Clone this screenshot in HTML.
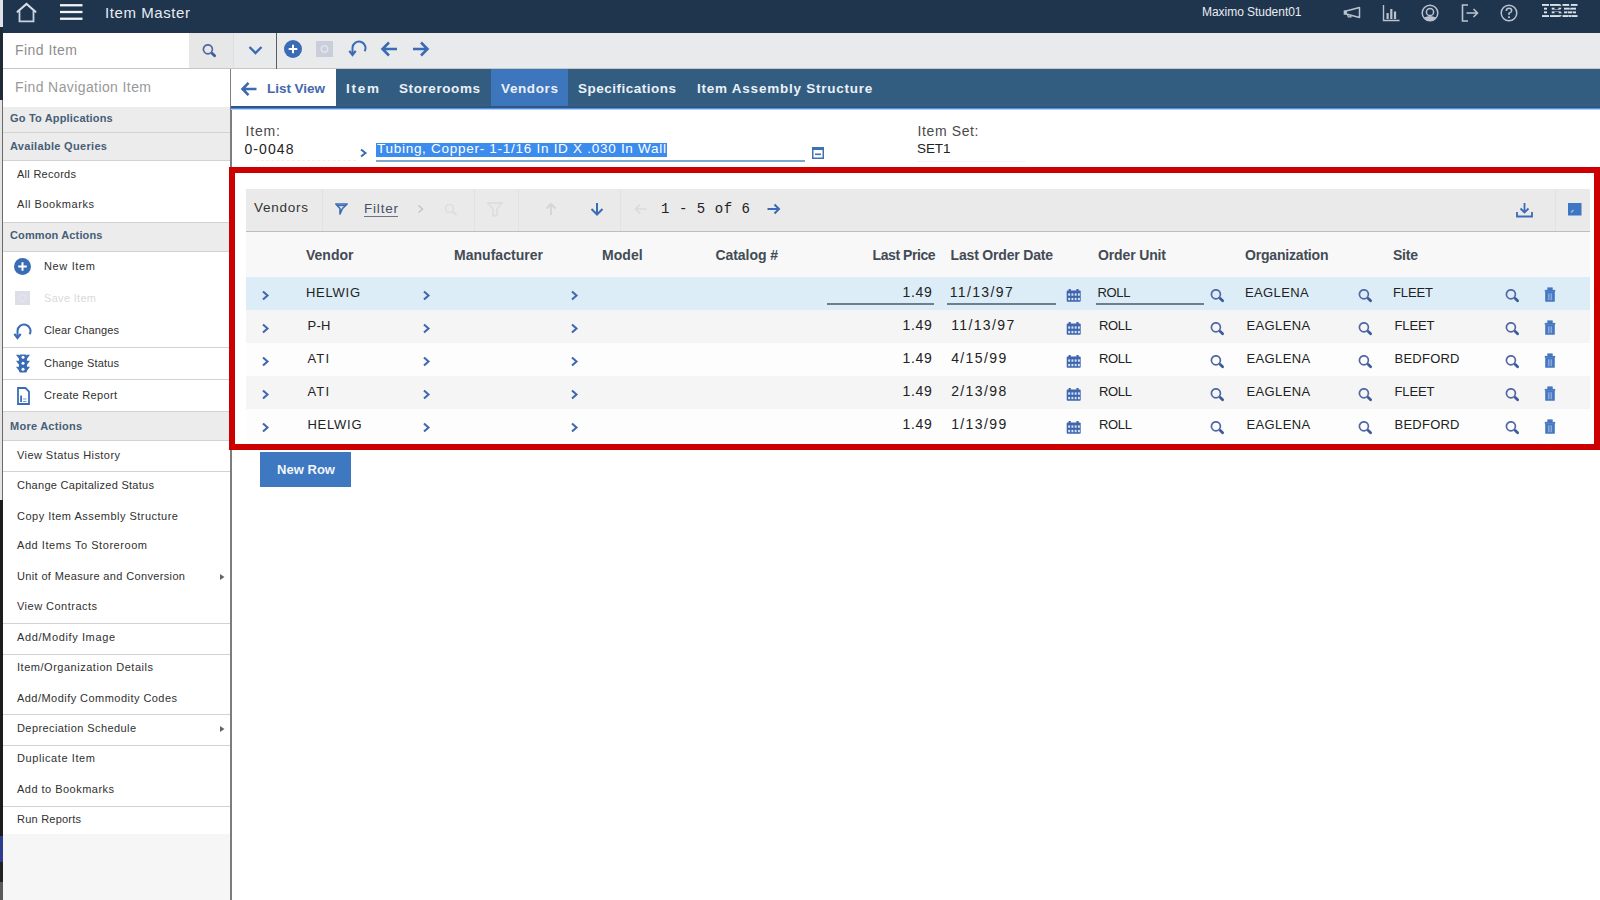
<!DOCTYPE html>
<html><head><meta charset="utf-8"><title>Item Master</title><style>*{box-sizing:border-box;margin:0;padding:0}
html,body{width:1600px;height:900px;overflow:hidden;background:#fff;font-family:"Liberation Sans",sans-serif;position:relative}
.a{position:absolute;display:block}
.t{position:absolute;white-space:nowrap;line-height:1}
</style></head><body>
<div class="a" style="left:0px;top:0px;width:3px;height:900px;background:#e4e4e4;"></div>
<div class="a" style="left:2px;top:0px;width:1px;height:900px;background:#6a6a6a;"></div>
<div class="a" style="left:0px;top:0px;width:3px;height:27px;background:#dfe3e8;"></div>
<div class="a" style="left:0px;top:27px;width:3px;height:73px;background:#1e2a36;"></div>
<div class="a" style="left:0px;top:500px;width:3px;height:336px;background:#1c1c1c;"></div>
<div class="a" style="left:0px;top:836px;width:3px;height:26px;background:#2d3c8e;"></div>
<div class="a" style="left:0px;top:862px;width:3px;height:20px;background:#222222;"></div>
<div class="a" style="left:0px;top:882px;width:3px;height:18px;background:#5a5a5a;"></div>
<div class="a" style="left:3px;top:0px;width:1597px;height:33px;background:#1f354d;"></div>
<div class="a" style="left:3px;top:33px;width:1597px;height:36px;background:#e9eaec;"></div>
<div class="a" style="left:3px;top:68px;width:1597px;height:1px;background:#c6c6c6;"></div>
<div class="a" style="left:3px;top:33px;width:186px;height:35px;background:#ffffff;"></div>
<div class="a" style="left:189px;top:33px;width:44px;height:35px;background:#e7e7e7;"></div>
<div class="a" style="left:233px;top:33px;width:1px;height:35px;background:#dedede;"></div>
<div class="a" style="left:276px;top:33px;width:1px;height:36px;background:#5c5c5c;"></div>
<div class="a" style="left:3px;top:69px;width:227px;height:831px;background:#ffffff;"></div>
<div class="a" style="left:3px;top:834px;width:227px;height:66px;background:#f6f6f6;"></div>
<div class="a" style="left:230px;top:69px;width:2px;height:831px;background:#7d7d7d;"></div>
<div class="a" style="left:3px;top:107px;width:227px;height:25px;background:#ececec;"></div>
<div class="a" style="left:3px;top:133px;width:227px;height:27px;background:#ececec;"></div>
<div class="a" style="left:3px;top:223px;width:227px;height:28px;background:#ececec;"></div>
<div class="a" style="left:3px;top:412px;width:227px;height:28px;background:#ececec;"></div>
<div class="a" style="left:3px;top:132px;width:227px;height:1px;background:#d2d2d2;"></div>
<div class="a" style="left:3px;top:160px;width:227px;height:1px;background:#d2d2d2;"></div>
<div class="a" style="left:3px;top:222px;width:227px;height:1px;background:#d2d2d2;"></div>
<div class="a" style="left:3px;top:251px;width:227px;height:1px;background:#d2d2d2;"></div>
<div class="a" style="left:3px;top:347px;width:227px;height:1px;background:#d2d2d2;"></div>
<div class="a" style="left:3px;top:379px;width:227px;height:1px;background:#d2d2d2;"></div>
<div class="a" style="left:3px;top:411px;width:227px;height:1px;background:#d2d2d2;"></div>
<div class="a" style="left:3px;top:440px;width:227px;height:1px;background:#d2d2d2;"></div>
<div class="a" style="left:3px;top:471px;width:227px;height:1px;background:#d2d2d2;"></div>
<div class="a" style="left:3px;top:623px;width:227px;height:1px;background:#d2d2d2;"></div>
<div class="a" style="left:3px;top:654px;width:227px;height:1px;background:#d2d2d2;"></div>
<div class="a" style="left:3px;top:714px;width:227px;height:1px;background:#d2d2d2;"></div>
<div class="a" style="left:3px;top:745px;width:227px;height:1px;background:#d2d2d2;"></div>
<div class="a" style="left:3px;top:806px;width:227px;height:1px;background:#d2d2d2;"></div>
<div class="a" style="left:231px;top:69px;width:1369px;height:38px;background:#335d80;"></div>
<div class="a" style="left:231px;top:104px;width:1369px;height:2px;background:#385c82;"></div>
<div class="a" style="left:231px;top:106px;width:1369px;height:2px;background:#2c5688;"></div>
<div class="a" style="left:231px;top:108px;width:1369px;height:1px;background:#4f8fdc;"></div>
<div class="a" style="left:231px;top:109px;width:1369px;height:1px;background:#b5d0f2;"></div>
<div class="a" style="left:231px;top:69px;width:105px;height:37px;background:#ffffff;"></div>
<div class="a" style="left:491px;top:69px;width:77px;height:37px;background:#3e76be;"></div>
<svg class="a" style="left:16px;top:2px;" width="22" height="21" viewBox="0 0 22 21"><path d="M1.5 9.8 L10.5 1.9 L19.5 9.8" fill="none" stroke="#d5deea" stroke-width="2" stroke-linecap="round"/><path d="M3.5 8.8 V19.4 H17.5 V8.8" fill="none" stroke="#c6d2e0" stroke-width="1.8"/></svg>
<svg class="a" style="left:60px;top:4px;" width="23" height="17" viewBox="0 0 23 17"><rect x="0" y="0.1" width="22.5" height="2.3" fill="#f2f4f7"/><rect x="0" y="6.85" width="22.5" height="2.3" fill="#f2f4f7"/><rect x="0" y="13.6" width="22.5" height="2.3" fill="#f2f4f7"/></svg>
<svg class="a" style="left:1343px;top:6px;" width="19" height="14" viewBox="0 0 19 14"><path d="M3.2 5 L16.5 1.5 V11.5 L3.2 8 Z" fill="none" stroke="#b9c3cf" stroke-width="1.5" stroke-linejoin="round"/><rect x="0.7" y="4.3" width="2.6" height="4.4" fill="#b9c3cf"/><path d="M4.5 8.6 L5.3 10.8 H8 L7.7 9.3" fill="none" stroke="#b9c3cf" stroke-width="1.2"/></svg>
<svg class="a" style="left:1382px;top:4px;" width="18" height="18" viewBox="0 0 18 18"><path d="M1.5 1 V16.5 H17.5" fill="none" stroke="#b9c3cf" stroke-width="1.4"/><rect x="4.5" y="9" width="2.2" height="6" fill="#b9c3cf"/><rect x="8.2" y="5" width="2.2" height="10" fill="#b9c3cf"/><rect x="11.9" y="7.5" width="2.2" height="7.5" fill="#b9c3cf"/></svg>
<svg class="a" style="left:1421px;top:4px;" width="18" height="18" viewBox="0 0 18 18"><circle cx="9" cy="9" r="7.8" fill="none" stroke="#b9c3cf" stroke-width="1.5"/><circle cx="9" cy="8" r="3.6" fill="none" stroke="#b9c3cf" stroke-width="1.5"/><path d="M3 13.5 Q9 10.5 15 13.5 Q12 17 9 17 Q6 17 3 13.5Z" fill="#b9c3cf"/></svg>
<svg class="a" style="left:1461px;top:4px;" width="19" height="18" viewBox="0 0 19 18"><path d="M7 1 H1.5 V17 H7" fill="none" stroke="#b9c3cf" stroke-width="1.6"/><path d="M5.5 9 H16.5 M12.5 5 L16.5 9 L12.5 13" fill="none" stroke="#b9c3cf" stroke-width="1.6"/></svg>
<svg class="a" style="left:1500px;top:4px;" width="18" height="18" viewBox="0 0 18 18"><circle cx="9" cy="9" r="7.8" fill="none" stroke="#b9c3cf" stroke-width="1.5"/><path d="M6.3 7 Q6.3 4.3 9 4.3 Q11.7 4.3 11.7 6.8 Q11.7 8.4 9 9.3 V11" fill="none" stroke="#b9c3cf" stroke-width="1.5"/><rect x="8.1" y="12.3" width="1.8" height="1.8" fill="#b9c3cf"/></svg>
<svg class="a" style="left:1542px;top:4px;" width="37" height="13" viewBox="0 0 37 13"><defs><mask id="ibmm"><rect x="0" y="0" width="37" height="1.9" fill="#fff"/><rect x="0" y="3.7" width="37" height="1.9" fill="#fff"/><rect x="0" y="7.4" width="37" height="1.9" fill="#fff"/><rect x="0" y="11.1" width="37" height="1.9" fill="#fff"/></mask></defs><g fill="#d8e0ea" mask="url(#ibmm)"><rect x="0" y="0" width="7" height="2.6"/><rect x="0" y="10.4" width="7" height="2.6"/><rect x="2" y="0" width="3" height="13"/><path d="M8 0 H17 Q19.5 0 19.5 3 Q19.5 5.5 17.5 6.5 Q19.8 7.5 19.8 10 Q19.8 13 17 13 H8 V10.4 H9.7 V2.6 H8 Z M12.5 2.6 V5.3 H15.5 Q16.5 5.3 16.5 4 Q16.5 2.6 15.5 2.6 Z M12.5 7.7 V10.4 H15.8 Q16.8 10.4 16.8 9 Q16.8 7.7 15.8 7.7 Z" fill-rule="evenodd"/><rect x="20.5" y="0" width="5.5" height="2.6"/><rect x="30" y="0" width="5.5" height="2.6"/><rect x="20.5" y="10.4" width="5.5" height="2.6"/><rect x="30" y="10.4" width="5.5" height="2.6"/><rect x="22" y="0" width="3" height="13"/><rect x="31" y="0" width="3" height="13"/><path d="M24 0 H27 L28 6 L29 0 H32 L29.5 13 H26.5 Z"/></g></svg>
<svg class="a" style="left:202px;top:44px;" width="15" height="14" viewBox="0 0 15 14"><circle cx="5.9" cy="5.3" r="4.5" fill="none" stroke="#5266a6" stroke-width="1.7"/><path d="M10.3 9.6 L12.6 11.8" stroke="#3a5d9a" stroke-width="2.8" stroke-linecap="round"/></svg>
<svg class="a" style="left:248px;top:45px;" width="15" height="10" viewBox="0 0 15 10"><path d="M1.5 2 L7.5 8 L13.5 2" fill="none" stroke="#3a6cb5" stroke-width="2.4"/></svg>
<svg class="a" style="left:284px;top:40px;" width="18" height="18" viewBox="0 0 18 18"><circle cx="9.0" cy="9.0" r="9.0" fill="#3a6cb5"/><path d="M9.0 4.7 V13.3 M4.7 9.0 H13.3" stroke="#fff" stroke-width="2"/></svg>
<svg class="a" style="left:316px;top:41px;" width="17" height="17" viewBox="0 0 17 17"><rect x="0" y="0" width="17" height="16" fill="#c9ceda"/><circle cx="8.5" cy="8.0" r="3.2" fill="none" stroke="#e1e4ec" stroke-width="1.5"/></svg>
<svg class="a" style="left:348px;top:40px;" width="19" height="17" viewBox="0 0 19 17"><path d="M16.6 11.3 A6.5 6.5 0 1 0 4.5 8 V13.5" fill="none" stroke="#3a6cb5" stroke-width="2"/><path d="M1.3 10.8 L4.5 15 L7.7 10.8" fill="none" stroke="#3a6cb5" stroke-width="2.2"/></svg>
<svg class="a" style="left:380px;top:41px;" width="18" height="16" viewBox="0 0 18 16"><path d="M17 8 H3 M9 1.5 L2.5 8 L9 14.5" fill="none" stroke="#3a6cb5" stroke-width="2.6"/></svg>
<svg class="a" style="left:412px;top:41px;" width="18" height="16" viewBox="0 0 18 16"><path d="M1 8 H15 M9 1.5 L15.5 8 L9 14.5" fill="none" stroke="#3a6cb5" stroke-width="2.6"/></svg>
<svg class="a" style="left:14px;top:258px;" width="17" height="17" viewBox="0 0 17 17"><circle cx="8.5" cy="8.5" r="8.5" fill="#3a6cb5"/><path d="M8.5 4.2 V12.8 M4.2 8.5 H12.8" stroke="#fff" stroke-width="2"/></svg>
<svg class="a" style="left:15px;top:291px;" width="15" height="15" viewBox="0 0 15 15"><rect x="0" y="0" width="15" height="14" fill="#dcdfe8"/><circle cx="7.5" cy="7.0" r="3.2" fill="none" stroke="#e1e4ec" stroke-width="1.5"/></svg>
<svg class="a" style="left:13px;top:323px;" width="19" height="17" viewBox="0 0 19 17"><path d="M16.6 11.3 A6.5 6.5 0 1 0 4.5 8 V13.5" fill="none" stroke="#3a6cb5" stroke-width="2"/><path d="M1.3 10.8 L4.5 15 L7.7 10.8" fill="none" stroke="#3a6cb5" stroke-width="2.2"/></svg>
<svg class="a" style="left:16px;top:354px;" width="14" height="19" viewBox="0 0 14 19"><rect x="3" y="0.5" width="8" height="18" rx="1.5" fill="#3a6cb5"/><path d="M0 0.8 H3 V4.8 Z M14 0.8 H11 V4.8 Z" fill="#3a6cb5"/><circle cx="7" cy="3.3" r="1.5" fill="#fff"/><path d="M0 6.8 H3 V10.8 Z M14 6.8 H11 V10.8 Z" fill="#3a6cb5"/><circle cx="7" cy="9.3" r="1.5" fill="#fff"/><path d="M0 12.8 H3 V16.8 Z M14 12.8 H11 V16.8 Z" fill="#3a6cb5"/><circle cx="7" cy="15.3" r="1.5" fill="#fff"/></svg>
<svg class="a" style="left:17px;top:387px;" width="13" height="18" viewBox="0 0 13 18"><path d="M1 1 H8.5 L12 4.5 V17 H1 Z" fill="none" stroke="#3a6cb5" stroke-width="1.8"/><rect x="3.2" y="8.5" width="1.8" height="6.5" fill="#3a6cb5"/><path d="M6 12 H9.5 M6 14.5 H9.5" stroke="#7c9bd0" stroke-width="1.2"/></svg>
<svg class="a" style="left:220px;top:574px;" width="5" height="6" viewBox="0 0 5 6"><path d="M0 0 L4.5 3 L0 6Z" fill="#666"/></svg>
<svg class="a" style="left:220px;top:726px;" width="5" height="6" viewBox="0 0 5 6"><path d="M0 0 L4.5 3 L0 6Z" fill="#666"/></svg>
<svg class="a" style="left:240px;top:81px;" width="18" height="16" viewBox="0 0 18 16"><path d="M16.5 8 H3 M8.5 1.8 L2.5 8 L8.5 14.2" fill="none" stroke="#3d69b0" stroke-width="2.6"/></svg>
<div class="a" style="left:256px;top:160px;width:100px;height:1px;border-top:1px dashed #efefef"></div>
<svg class="a" style="left:359px;top:148px;" width="9" height="10" viewBox="0 0 9 10"><path d="M2 1.5 L6.5 5 L2 8.5" fill="none" stroke="#3a6cb5" stroke-width="2"/></svg>
<div class="a" style="left:376px;top:143px;width:291px;height:13.5px;background:#3b8ced;"></div>
<div class="a" style="left:376px;top:160px;width:429px;height:2px;background:#7ea6cf;"></div>
<svg class="a" style="left:812px;top:147px;" width="12" height="12" viewBox="0 0 12 12"><rect x="0.75" y="0.75" width="10.5" height="10.5" fill="none" stroke="#3f6fb5" stroke-width="1.5"/><rect x="0" y="0" width="12" height="3" fill="#3f6fb5"/><rect x="3" y="6.5" width="6" height="1.6" fill="#3f6fb5"/></svg>
<div class="a" style="left:917px;top:161px;width:108px;height:1px;background:#eef1f5;"></div>
<div class="a" style="left:246px;top:189px;width:1344px;height:42px;background:#eaeaea;"></div>
<div class="a" style="left:246px;top:231px;width:1344px;height:1px;background:#bdbdbd;"></div>
<div class="a" style="left:322px;top:189px;width:1px;height:42px;background:#e2e2e2;"></div>
<div class="a" style="left:474px;top:189px;width:1px;height:42px;background:#e2e2e2;"></div>
<div class="a" style="left:518px;top:189px;width:1px;height:42px;background:#e2e2e2;"></div>
<div class="a" style="left:620px;top:189px;width:1px;height:42px;background:#e2e2e2;"></div>
<div class="a" style="left:1555px;top:189px;width:1px;height:42px;background:#e2e2e2;"></div>
<svg class="a" style="left:335px;top:203px;" width="13" height="12" viewBox="0 0 13 12"><path d="M0.8 1 H12.2 L7.5 5.5 L5 11 V5.5 Z" fill="none" stroke="#3a6cb5" stroke-width="1.6" stroke-linejoin="round"/><path d="M3 2.5 H10" stroke="#3a6cb5" stroke-width="1.4"/></svg>
<div class="a" style="left:364px;top:215.5px;width:34px;height:1.3px;background:#6b7385;"></div>
<svg class="a" style="left:417px;top:204px;" width="7" height="10" viewBox="0 0 7 10"><path d="M1.5 1.5 L5.5 5 L1.5 8.5" fill="none" stroke="#c2c2c2" stroke-width="1.4"/></svg>
<svg class="a" style="left:444px;top:203px;" width="14" height="13" viewBox="0 0 14 13"><circle cx="5.5" cy="5.5" r="4" fill="none" stroke="#dedede" stroke-width="1.6"/><path d="M8.5 8.5 L12.5 12" stroke="#dedede" stroke-width="2.2"/></svg>
<svg class="a" style="left:487px;top:202px;" width="16" height="15" viewBox="0 0 16 15"><path d="M1 1 H15 L10 7 V13 L6 14 V7 Z" fill="none" stroke="#dedede" stroke-width="1.8"/></svg>
<svg class="a" style="left:545px;top:202px;" width="12" height="14" viewBox="0 0 12 14"><path d="M6 13 V2 M1.5 6.5 L6 2 L10.5 6.5" fill="none" stroke="#d6d6d6" stroke-width="2"/></svg>
<svg class="a" style="left:590px;top:202px;" width="14" height="14" viewBox="0 0 14 14"><path d="M7 1 V12.5 M1.5 7 L7 12.5 L12.5 7" fill="none" stroke="#3a6cb5" stroke-width="2"/></svg>
<svg class="a" style="left:634px;top:203px;" width="13" height="12" viewBox="0 0 13 12"><path d="M12.5 6 H1.5 M6 1.5 L1.5 6 L6 10.5" fill="none" stroke="#dadada" stroke-width="1.6"/></svg>
<svg class="a" style="left:767px;top:203px;" width="14" height="12" viewBox="0 0 14 12"><path d="M0.5 6 H12 M7.5 1.5 L12 6 L7.5 10.5" fill="none" stroke="#3a6cb5" stroke-width="2"/></svg>
<svg class="a" style="left:1516px;top:202px;" width="17" height="16" viewBox="0 0 17 16"><path d="M8.5 1 V10.5 M4.5 6.5 L8.5 10.5 L12.5 6.5" fill="none" stroke="#3a6cb5" stroke-width="1.8"/><path d="M1 10 V14.5 H16 V10" fill="none" stroke="#3a6cb5" stroke-width="1.8"/></svg>
<svg class="a" style="left:1568px;top:203px;" width="14" height="13" viewBox="0 0 14 13"><rect x="0" y="0" width="13.5" height="12.5" fill="#3f76c4"/><path d="M3 9.5 L5.5 7" stroke="#9cc0ee" stroke-width="1.4"/></svg>
<div class="a" style="left:246px;top:232px;width:1344px;height:45px;background:#f8f8f8;"></div>
<div class="a" style="left:246px;top:277px;width:1344px;height:33px;background:#dcedf7;"></div>
<svg class="a" style="left:261px;top:290px;" width="9" height="11" viewBox="0 0 9 11"><path d="M2 1.5 L6.5 5.5 L2 9.5" fill="none" stroke="#4068ad" stroke-width="2.1"/></svg>
<svg class="a" style="left:422px;top:290px;" width="9" height="11" viewBox="0 0 9 11"><path d="M2 1.5 L6.5 5.5 L2 9.5" fill="none" stroke="#4068ad" stroke-width="2.1"/></svg>
<svg class="a" style="left:570px;top:290px;" width="9" height="11" viewBox="0 0 9 11"><path d="M2 1.5 L6.5 5.5 L2 9.5" fill="none" stroke="#4068ad" stroke-width="2.1"/></svg>
<svg class="a" style="left:1066px;top:289px;" width="15" height="14" viewBox="0 0 15 14"><rect x="0.7" y="1.6" width="14" height="11.2" rx="1" fill="#3f66ad"/><rect x="2.6" y="0" width="2.2" height="3" fill="#3f66ad"/><rect x="10.4" y="0" width="2.2" height="3" fill="#3f66ad"/><rect x="2.20" y="4.4" width="1.9" height="2.3" fill="#d6e4f6"/><rect x="2.20" y="8.9" width="1.9" height="2.3" fill="#d6e4f6"/><rect x="5.45" y="4.4" width="1.9" height="2.3" fill="#d6e4f6"/><rect x="5.45" y="8.9" width="1.9" height="2.3" fill="#d6e4f6"/><rect x="8.70" y="4.4" width="1.9" height="2.3" fill="#d6e4f6"/><rect x="8.70" y="8.9" width="1.9" height="2.3" fill="#d6e4f6"/><rect x="11.95" y="4.4" width="1.9" height="2.3" fill="#d6e4f6"/><rect x="11.95" y="8.9" width="1.9" height="2.3" fill="#d6e4f6"/></svg>
<svg class="a" style="left:1210px;top:289px;" width="15" height="14" viewBox="0 0 15 14"><circle cx="5.9" cy="5.3" r="4.5" fill="none" stroke="#5266a6" stroke-width="1.7"/><path d="M10.3 9.6 L12.6 11.8" stroke="#3a5d9a" stroke-width="2.8" stroke-linecap="round"/></svg>
<svg class="a" style="left:1358px;top:289px;" width="15" height="14" viewBox="0 0 15 14"><circle cx="5.9" cy="5.3" r="4.5" fill="none" stroke="#5266a6" stroke-width="1.7"/><path d="M10.3 9.6 L12.6 11.8" stroke="#3a5d9a" stroke-width="2.8" stroke-linecap="round"/></svg>
<svg class="a" style="left:1505px;top:289px;" width="15" height="14" viewBox="0 0 15 14"><circle cx="5.9" cy="5.3" r="4.5" fill="none" stroke="#5266a6" stroke-width="1.7"/><path d="M10.3 9.6 L12.6 11.8" stroke="#3a5d9a" stroke-width="2.8" stroke-linecap="round"/></svg>
<svg class="a" style="left:1544px;top:287px;" width="12" height="16" viewBox="0 0 12 16"><rect x="3.3" y="0.4" width="5.4" height="2.6" fill="#4576c0"/><rect x="0.8" y="2.9" width="10.4" height="1.9" fill="#4576c0"/><path d="M1.2 4.6 H10.8 V14.2 Q10.8 14.8 10.2 14.8 H1.8 Q1.2 14.8 1.2 14.2 Z" fill="#4576c0"/><path d="M4.4 6.3 V13.2 M6 6.3 V13.2 M7.6 6.3 V13.2" stroke="#a3bde6" stroke-width="0.8"/></svg>
<div class="a" style="left:827px;top:303px;width:107px;height:1.6px;background:#6e7e8c;"></div>
<div class="a" style="left:947px;top:303px;width:109px;height:1.6px;background:#6e7e8c;"></div>
<div class="a" style="left:1096px;top:303px;width:108px;height:1.6px;background:#6e7e8c;"></div>
<div class="a" style="left:246px;top:310px;width:1344px;height:33px;background:#f5f5f5;"></div>
<svg class="a" style="left:261px;top:323px;" width="9" height="11" viewBox="0 0 9 11"><path d="M2 1.5 L6.5 5.5 L2 9.5" fill="none" stroke="#4068ad" stroke-width="2.1"/></svg>
<svg class="a" style="left:422px;top:323px;" width="9" height="11" viewBox="0 0 9 11"><path d="M2 1.5 L6.5 5.5 L2 9.5" fill="none" stroke="#4068ad" stroke-width="2.1"/></svg>
<svg class="a" style="left:570px;top:323px;" width="9" height="11" viewBox="0 0 9 11"><path d="M2 1.5 L6.5 5.5 L2 9.5" fill="none" stroke="#4068ad" stroke-width="2.1"/></svg>
<svg class="a" style="left:1066px;top:322px;" width="15" height="14" viewBox="0 0 15 14"><rect x="0.7" y="1.6" width="14" height="11.2" rx="1" fill="#3f66ad"/><rect x="2.6" y="0" width="2.2" height="3" fill="#3f66ad"/><rect x="10.4" y="0" width="2.2" height="3" fill="#3f66ad"/><rect x="2.20" y="4.4" width="1.9" height="2.3" fill="#d6e4f6"/><rect x="2.20" y="8.9" width="1.9" height="2.3" fill="#d6e4f6"/><rect x="5.45" y="4.4" width="1.9" height="2.3" fill="#d6e4f6"/><rect x="5.45" y="8.9" width="1.9" height="2.3" fill="#d6e4f6"/><rect x="8.70" y="4.4" width="1.9" height="2.3" fill="#d6e4f6"/><rect x="8.70" y="8.9" width="1.9" height="2.3" fill="#d6e4f6"/><rect x="11.95" y="4.4" width="1.9" height="2.3" fill="#d6e4f6"/><rect x="11.95" y="8.9" width="1.9" height="2.3" fill="#d6e4f6"/></svg>
<svg class="a" style="left:1210px;top:322px;" width="15" height="14" viewBox="0 0 15 14"><circle cx="5.9" cy="5.3" r="4.5" fill="none" stroke="#5266a6" stroke-width="1.7"/><path d="M10.3 9.6 L12.6 11.8" stroke="#3a5d9a" stroke-width="2.8" stroke-linecap="round"/></svg>
<svg class="a" style="left:1358px;top:322px;" width="15" height="14" viewBox="0 0 15 14"><circle cx="5.9" cy="5.3" r="4.5" fill="none" stroke="#5266a6" stroke-width="1.7"/><path d="M10.3 9.6 L12.6 11.8" stroke="#3a5d9a" stroke-width="2.8" stroke-linecap="round"/></svg>
<svg class="a" style="left:1505px;top:322px;" width="15" height="14" viewBox="0 0 15 14"><circle cx="5.9" cy="5.3" r="4.5" fill="none" stroke="#5266a6" stroke-width="1.7"/><path d="M10.3 9.6 L12.6 11.8" stroke="#3a5d9a" stroke-width="2.8" stroke-linecap="round"/></svg>
<svg class="a" style="left:1544px;top:320px;" width="12" height="16" viewBox="0 0 12 16"><rect x="3.3" y="0.4" width="5.4" height="2.6" fill="#4576c0"/><rect x="0.8" y="2.9" width="10.4" height="1.9" fill="#4576c0"/><path d="M1.2 4.6 H10.8 V14.2 Q10.8 14.8 10.2 14.8 H1.8 Q1.2 14.8 1.2 14.2 Z" fill="#4576c0"/><path d="M4.4 6.3 V13.2 M6 6.3 V13.2 M7.6 6.3 V13.2" stroke="#a3bde6" stroke-width="0.8"/></svg>
<div class="a" style="left:246px;top:343px;width:1344px;height:33px;background:#fdfdfd;"></div>
<svg class="a" style="left:261px;top:356px;" width="9" height="11" viewBox="0 0 9 11"><path d="M2 1.5 L6.5 5.5 L2 9.5" fill="none" stroke="#4068ad" stroke-width="2.1"/></svg>
<svg class="a" style="left:422px;top:356px;" width="9" height="11" viewBox="0 0 9 11"><path d="M2 1.5 L6.5 5.5 L2 9.5" fill="none" stroke="#4068ad" stroke-width="2.1"/></svg>
<svg class="a" style="left:570px;top:356px;" width="9" height="11" viewBox="0 0 9 11"><path d="M2 1.5 L6.5 5.5 L2 9.5" fill="none" stroke="#4068ad" stroke-width="2.1"/></svg>
<svg class="a" style="left:1066px;top:355px;" width="15" height="14" viewBox="0 0 15 14"><rect x="0.7" y="1.6" width="14" height="11.2" rx="1" fill="#3f66ad"/><rect x="2.6" y="0" width="2.2" height="3" fill="#3f66ad"/><rect x="10.4" y="0" width="2.2" height="3" fill="#3f66ad"/><rect x="2.20" y="4.4" width="1.9" height="2.3" fill="#d6e4f6"/><rect x="2.20" y="8.9" width="1.9" height="2.3" fill="#d6e4f6"/><rect x="5.45" y="4.4" width="1.9" height="2.3" fill="#d6e4f6"/><rect x="5.45" y="8.9" width="1.9" height="2.3" fill="#d6e4f6"/><rect x="8.70" y="4.4" width="1.9" height="2.3" fill="#d6e4f6"/><rect x="8.70" y="8.9" width="1.9" height="2.3" fill="#d6e4f6"/><rect x="11.95" y="4.4" width="1.9" height="2.3" fill="#d6e4f6"/><rect x="11.95" y="8.9" width="1.9" height="2.3" fill="#d6e4f6"/></svg>
<svg class="a" style="left:1210px;top:355px;" width="15" height="14" viewBox="0 0 15 14"><circle cx="5.9" cy="5.3" r="4.5" fill="none" stroke="#5266a6" stroke-width="1.7"/><path d="M10.3 9.6 L12.6 11.8" stroke="#3a5d9a" stroke-width="2.8" stroke-linecap="round"/></svg>
<svg class="a" style="left:1358px;top:355px;" width="15" height="14" viewBox="0 0 15 14"><circle cx="5.9" cy="5.3" r="4.5" fill="none" stroke="#5266a6" stroke-width="1.7"/><path d="M10.3 9.6 L12.6 11.8" stroke="#3a5d9a" stroke-width="2.8" stroke-linecap="round"/></svg>
<svg class="a" style="left:1505px;top:355px;" width="15" height="14" viewBox="0 0 15 14"><circle cx="5.9" cy="5.3" r="4.5" fill="none" stroke="#5266a6" stroke-width="1.7"/><path d="M10.3 9.6 L12.6 11.8" stroke="#3a5d9a" stroke-width="2.8" stroke-linecap="round"/></svg>
<svg class="a" style="left:1544px;top:353px;" width="12" height="16" viewBox="0 0 12 16"><rect x="3.3" y="0.4" width="5.4" height="2.6" fill="#4576c0"/><rect x="0.8" y="2.9" width="10.4" height="1.9" fill="#4576c0"/><path d="M1.2 4.6 H10.8 V14.2 Q10.8 14.8 10.2 14.8 H1.8 Q1.2 14.8 1.2 14.2 Z" fill="#4576c0"/><path d="M4.4 6.3 V13.2 M6 6.3 V13.2 M7.6 6.3 V13.2" stroke="#a3bde6" stroke-width="0.8"/></svg>
<div class="a" style="left:246px;top:376px;width:1344px;height:33px;background:#f5f5f5;"></div>
<svg class="a" style="left:261px;top:389px;" width="9" height="11" viewBox="0 0 9 11"><path d="M2 1.5 L6.5 5.5 L2 9.5" fill="none" stroke="#4068ad" stroke-width="2.1"/></svg>
<svg class="a" style="left:422px;top:389px;" width="9" height="11" viewBox="0 0 9 11"><path d="M2 1.5 L6.5 5.5 L2 9.5" fill="none" stroke="#4068ad" stroke-width="2.1"/></svg>
<svg class="a" style="left:570px;top:389px;" width="9" height="11" viewBox="0 0 9 11"><path d="M2 1.5 L6.5 5.5 L2 9.5" fill="none" stroke="#4068ad" stroke-width="2.1"/></svg>
<svg class="a" style="left:1066px;top:388px;" width="15" height="14" viewBox="0 0 15 14"><rect x="0.7" y="1.6" width="14" height="11.2" rx="1" fill="#3f66ad"/><rect x="2.6" y="0" width="2.2" height="3" fill="#3f66ad"/><rect x="10.4" y="0" width="2.2" height="3" fill="#3f66ad"/><rect x="2.20" y="4.4" width="1.9" height="2.3" fill="#d6e4f6"/><rect x="2.20" y="8.9" width="1.9" height="2.3" fill="#d6e4f6"/><rect x="5.45" y="4.4" width="1.9" height="2.3" fill="#d6e4f6"/><rect x="5.45" y="8.9" width="1.9" height="2.3" fill="#d6e4f6"/><rect x="8.70" y="4.4" width="1.9" height="2.3" fill="#d6e4f6"/><rect x="8.70" y="8.9" width="1.9" height="2.3" fill="#d6e4f6"/><rect x="11.95" y="4.4" width="1.9" height="2.3" fill="#d6e4f6"/><rect x="11.95" y="8.9" width="1.9" height="2.3" fill="#d6e4f6"/></svg>
<svg class="a" style="left:1210px;top:388px;" width="15" height="14" viewBox="0 0 15 14"><circle cx="5.9" cy="5.3" r="4.5" fill="none" stroke="#5266a6" stroke-width="1.7"/><path d="M10.3 9.6 L12.6 11.8" stroke="#3a5d9a" stroke-width="2.8" stroke-linecap="round"/></svg>
<svg class="a" style="left:1358px;top:388px;" width="15" height="14" viewBox="0 0 15 14"><circle cx="5.9" cy="5.3" r="4.5" fill="none" stroke="#5266a6" stroke-width="1.7"/><path d="M10.3 9.6 L12.6 11.8" stroke="#3a5d9a" stroke-width="2.8" stroke-linecap="round"/></svg>
<svg class="a" style="left:1505px;top:388px;" width="15" height="14" viewBox="0 0 15 14"><circle cx="5.9" cy="5.3" r="4.5" fill="none" stroke="#5266a6" stroke-width="1.7"/><path d="M10.3 9.6 L12.6 11.8" stroke="#3a5d9a" stroke-width="2.8" stroke-linecap="round"/></svg>
<svg class="a" style="left:1544px;top:386px;" width="12" height="16" viewBox="0 0 12 16"><rect x="3.3" y="0.4" width="5.4" height="2.6" fill="#4576c0"/><rect x="0.8" y="2.9" width="10.4" height="1.9" fill="#4576c0"/><path d="M1.2 4.6 H10.8 V14.2 Q10.8 14.8 10.2 14.8 H1.8 Q1.2 14.8 1.2 14.2 Z" fill="#4576c0"/><path d="M4.4 6.3 V13.2 M6 6.3 V13.2 M7.6 6.3 V13.2" stroke="#a3bde6" stroke-width="0.8"/></svg>
<div class="a" style="left:246px;top:409px;width:1344px;height:33px;background:#fdfdfd;"></div>
<svg class="a" style="left:261px;top:422px;" width="9" height="11" viewBox="0 0 9 11"><path d="M2 1.5 L6.5 5.5 L2 9.5" fill="none" stroke="#4068ad" stroke-width="2.1"/></svg>
<svg class="a" style="left:422px;top:422px;" width="9" height="11" viewBox="0 0 9 11"><path d="M2 1.5 L6.5 5.5 L2 9.5" fill="none" stroke="#4068ad" stroke-width="2.1"/></svg>
<svg class="a" style="left:570px;top:422px;" width="9" height="11" viewBox="0 0 9 11"><path d="M2 1.5 L6.5 5.5 L2 9.5" fill="none" stroke="#4068ad" stroke-width="2.1"/></svg>
<svg class="a" style="left:1066px;top:421px;" width="15" height="14" viewBox="0 0 15 14"><rect x="0.7" y="1.6" width="14" height="11.2" rx="1" fill="#3f66ad"/><rect x="2.6" y="0" width="2.2" height="3" fill="#3f66ad"/><rect x="10.4" y="0" width="2.2" height="3" fill="#3f66ad"/><rect x="2.20" y="4.4" width="1.9" height="2.3" fill="#d6e4f6"/><rect x="2.20" y="8.9" width="1.9" height="2.3" fill="#d6e4f6"/><rect x="5.45" y="4.4" width="1.9" height="2.3" fill="#d6e4f6"/><rect x="5.45" y="8.9" width="1.9" height="2.3" fill="#d6e4f6"/><rect x="8.70" y="4.4" width="1.9" height="2.3" fill="#d6e4f6"/><rect x="8.70" y="8.9" width="1.9" height="2.3" fill="#d6e4f6"/><rect x="11.95" y="4.4" width="1.9" height="2.3" fill="#d6e4f6"/><rect x="11.95" y="8.9" width="1.9" height="2.3" fill="#d6e4f6"/></svg>
<svg class="a" style="left:1210px;top:421px;" width="15" height="14" viewBox="0 0 15 14"><circle cx="5.9" cy="5.3" r="4.5" fill="none" stroke="#5266a6" stroke-width="1.7"/><path d="M10.3 9.6 L12.6 11.8" stroke="#3a5d9a" stroke-width="2.8" stroke-linecap="round"/></svg>
<svg class="a" style="left:1358px;top:421px;" width="15" height="14" viewBox="0 0 15 14"><circle cx="5.9" cy="5.3" r="4.5" fill="none" stroke="#5266a6" stroke-width="1.7"/><path d="M10.3 9.6 L12.6 11.8" stroke="#3a5d9a" stroke-width="2.8" stroke-linecap="round"/></svg>
<svg class="a" style="left:1505px;top:421px;" width="15" height="14" viewBox="0 0 15 14"><circle cx="5.9" cy="5.3" r="4.5" fill="none" stroke="#5266a6" stroke-width="1.7"/><path d="M10.3 9.6 L12.6 11.8" stroke="#3a5d9a" stroke-width="2.8" stroke-linecap="round"/></svg>
<svg class="a" style="left:1544px;top:419px;" width="12" height="16" viewBox="0 0 12 16"><rect x="3.3" y="0.4" width="5.4" height="2.6" fill="#4576c0"/><rect x="0.8" y="2.9" width="10.4" height="1.9" fill="#4576c0"/><path d="M1.2 4.6 H10.8 V14.2 Q10.8 14.8 10.2 14.8 H1.8 Q1.2 14.8 1.2 14.2 Z" fill="#4576c0"/><path d="M4.4 6.3 V13.2 M6 6.3 V13.2 M7.6 6.3 V13.2" stroke="#a3bde6" stroke-width="0.8"/></svg>
<div class="a" style="left:229px;top:167px;width:1371px;height:283px;border:6px solid #cc0000;border-right-width:6px"></div>
<div class="a" style="left:260px;top:452px;width:91px;height:35px;background:#3d78c0;"></div>
<div class="t" style="left:105.00px;top:4.50px;font-family:'Liberation Sans',sans-serif;font-size:15px;font-weight:normal;color:#e8ecf2;letter-spacing:0.581px;">Item Master</div>
<div class="t" style="left:1202.00px;top:5.84px;font-family:'Liberation Sans',sans-serif;font-size:12px;font-weight:normal;color:#e8ecf2;letter-spacing:-0.037px;">Maximo Student01</div>
<div class="t" style="left:15.00px;top:42.65px;font-family:'Liberation Sans',sans-serif;font-size:14px;font-weight:normal;color:#8e8e8e;letter-spacing:0.455px;">Find Item</div>
<div class="t" style="left:15.00px;top:79.65px;font-family:'Liberation Sans',sans-serif;font-size:14px;font-weight:normal;color:#999;letter-spacing:0.400px;">Find Navigation Item</div>
<div class="t" style="left:10.00px;top:112.69px;font-family:'Liberation Sans',sans-serif;font-size:11px;font-weight:bold;color:#465e77;letter-spacing:0.182px;">Go To Applications</div>
<div class="t" style="left:10.00px;top:140.69px;font-family:'Liberation Sans',sans-serif;font-size:11px;font-weight:bold;color:#465e77;letter-spacing:0.317px;">Available Queries</div>
<div class="t" style="left:10.00px;top:230.19px;font-family:'Liberation Sans',sans-serif;font-size:11px;font-weight:bold;color:#465e77;letter-spacing:0.134px;">Common Actions</div>
<div class="t" style="left:10.00px;top:421.19px;font-family:'Liberation Sans',sans-serif;font-size:11px;font-weight:bold;color:#465e77;letter-spacing:0.249px;">More Actions</div>
<div class="t" style="left:17.00px;top:169.29px;font-family:'Liberation Sans',sans-serif;font-size:11px;font-weight:normal;color:#303030;letter-spacing:0.275px;">All Records</div>
<div class="t" style="left:17.00px;top:199.29px;font-family:'Liberation Sans',sans-serif;font-size:11px;font-weight:normal;color:#303030;letter-spacing:0.559px;">All Bookmarks</div>
<div class="t" style="left:44.00px;top:261.29px;font-family:'Liberation Sans',sans-serif;font-size:11px;font-weight:normal;color:#303030;letter-spacing:0.647px;">New Item</div>
<div class="t" style="left:44.00px;top:293.29px;font-family:'Liberation Sans',sans-serif;font-size:11px;font-weight:normal;color:#dadada;letter-spacing:0.309px;">Save Item</div>
<div class="t" style="left:44.00px;top:325.29px;font-family:'Liberation Sans',sans-serif;font-size:11px;font-weight:normal;color:#303030;letter-spacing:0.135px;">Clear Changes</div>
<div class="t" style="left:44.00px;top:358.29px;font-family:'Liberation Sans',sans-serif;font-size:11px;font-weight:normal;color:#303030;letter-spacing:0.185px;">Change Status</div>
<div class="t" style="left:44.00px;top:390.29px;font-family:'Liberation Sans',sans-serif;font-size:11px;font-weight:normal;color:#303030;letter-spacing:0.326px;">Create Report</div>
<div class="t" style="left:17.00px;top:450.29px;font-family:'Liberation Sans',sans-serif;font-size:11px;font-weight:normal;color:#303030;letter-spacing:0.435px;">View Status History</div>
<div class="t" style="left:17.00px;top:480.29px;font-family:'Liberation Sans',sans-serif;font-size:11px;font-weight:normal;color:#303030;letter-spacing:0.281px;">Change Capitalized Status</div>
<div class="t" style="left:17.00px;top:511.29px;font-family:'Liberation Sans',sans-serif;font-size:11px;font-weight:normal;color:#303030;letter-spacing:0.483px;">Copy Item Assembly Structure</div>
<div class="t" style="left:17.00px;top:540.29px;font-family:'Liberation Sans',sans-serif;font-size:11px;font-weight:normal;color:#303030;letter-spacing:0.552px;">Add Items To Storeroom</div>
<div class="t" style="left:17.00px;top:571.29px;font-family:'Liberation Sans',sans-serif;font-size:11px;font-weight:normal;color:#303030;letter-spacing:0.353px;">Unit of Measure and Conversion</div>
<div class="t" style="left:17.00px;top:601.29px;font-family:'Liberation Sans',sans-serif;font-size:11px;font-weight:normal;color:#303030;letter-spacing:0.478px;">View Contracts</div>
<div class="t" style="left:17.00px;top:632.29px;font-family:'Liberation Sans',sans-serif;font-size:11px;font-weight:normal;color:#303030;letter-spacing:0.623px;">Add/Modify Image</div>
<div class="t" style="left:17.00px;top:662.29px;font-family:'Liberation Sans',sans-serif;font-size:11px;font-weight:normal;color:#303030;letter-spacing:0.521px;">Item/Organization Details</div>
<div class="t" style="left:17.00px;top:693.29px;font-family:'Liberation Sans',sans-serif;font-size:11px;font-weight:normal;color:#303030;letter-spacing:0.458px;">Add/Modify Commodity Codes</div>
<div class="t" style="left:17.00px;top:723.29px;font-family:'Liberation Sans',sans-serif;font-size:11px;font-weight:normal;color:#303030;letter-spacing:0.416px;">Depreciation Schedule</div>
<div class="t" style="left:17.00px;top:753.29px;font-family:'Liberation Sans',sans-serif;font-size:11px;font-weight:normal;color:#303030;letter-spacing:0.591px;">Duplicate Item</div>
<div class="t" style="left:17.00px;top:784.29px;font-family:'Liberation Sans',sans-serif;font-size:11px;font-weight:normal;color:#303030;letter-spacing:0.475px;">Add to Bookmarks</div>
<div class="t" style="left:17.00px;top:814.29px;font-family:'Liberation Sans',sans-serif;font-size:11px;font-weight:normal;color:#303030;letter-spacing:0.223px;">Run Reports</div>
<div class="t" style="left:267.00px;top:81.57px;font-family:'Liberation Sans',sans-serif;font-size:13.5px;font-weight:bold;color:#4468aa;letter-spacing:-0.035px;">List View</div>
<div class="t" style="left:346.00px;top:81.57px;font-family:'Liberation Sans',sans-serif;font-size:13.5px;font-weight:bold;color:#eaf1f9;letter-spacing:1.745px;">Item</div>
<div class="t" style="left:399.00px;top:81.57px;font-family:'Liberation Sans',sans-serif;font-size:13.5px;font-weight:bold;color:#eaf1f9;letter-spacing:0.580px;">Storerooms</div>
<div class="t" style="left:501.00px;top:81.57px;font-family:'Liberation Sans',sans-serif;font-size:13.5px;font-weight:bold;color:#eaf1f9;letter-spacing:0.620px;">Vendors</div>
<div class="t" style="left:578.00px;top:81.57px;font-family:'Liberation Sans',sans-serif;font-size:13.5px;font-weight:bold;color:#eaf1f9;letter-spacing:0.498px;">Specifications</div>
<div class="t" style="left:697.00px;top:81.57px;font-family:'Liberation Sans',sans-serif;font-size:13.5px;font-weight:bold;color:#eaf1f9;letter-spacing:0.765px;">Item Assembly Structure</div>
<div class="t" style="left:245.50px;top:124.15px;font-family:'Liberation Sans',sans-serif;font-size:14px;font-weight:normal;color:#4a4a4a;letter-spacing:0.844px;">Item:</div>
<div class="t" style="left:244.50px;top:141.65px;font-family:'Liberation Sans',sans-serif;font-size:14px;font-weight:normal;color:#222;letter-spacing:1.081px;">0-0048</div>
<div class="t" style="left:377.00px;top:142.07px;font-family:'Liberation Sans',sans-serif;font-size:13.5px;font-weight:normal;color:#ffffff;letter-spacing:0.723px;">Tubing, Copper- 1-1/16 In ID X .030 In Wall</div>
<div class="t" style="left:917.50px;top:124.15px;font-family:'Liberation Sans',sans-serif;font-size:14px;font-weight:normal;color:#4a4a4a;letter-spacing:0.621px;">Item Set:</div>
<div class="t" style="left:917.00px;top:142.07px;font-family:'Liberation Sans',sans-serif;font-size:13.5px;font-weight:normal;color:#222;letter-spacing:-0.089px;">SET1</div>
<div class="t" style="left:254.00px;top:201.07px;font-family:'Liberation Sans',sans-serif;font-size:13.5px;font-weight:normal;color:#333;letter-spacing:0.742px;">Vendors</div>
<div class="t" style="left:364.00px;top:202.07px;font-family:'Liberation Sans',sans-serif;font-size:13.5px;font-weight:normal;color:#455168;letter-spacing:0.800px;">Filter</div>
<div class="t" style="left:661.00px;top:201.90px;font-family:'Liberation Mono',sans-serif;font-size:14px;font-weight:normal;color:#222;letter-spacing:0.554px;">1 - 5 of 6</div>
<div class="t" style="left:306.00px;top:247.65px;font-family:'Liberation Sans',sans-serif;font-size:14px;font-weight:bold;color:#434b55;letter-spacing:0.006px;">Vendor</div>
<div class="t" style="left:454.00px;top:247.65px;font-family:'Liberation Sans',sans-serif;font-size:14px;font-weight:bold;color:#434b55;letter-spacing:0.028px;">Manufacturer</div>
<div class="t" style="left:602.00px;top:247.65px;font-family:'Liberation Sans',sans-serif;font-size:14px;font-weight:bold;color:#434b55;letter-spacing:0.037px;">Model</div>
<div class="t" style="left:715.50px;top:247.65px;font-family:'Liberation Sans',sans-serif;font-size:14px;font-weight:bold;color:#434b55;letter-spacing:-0.064px;">Catalog #</div>
<div class="t" style="left:872.60px;top:247.65px;font-family:'Liberation Sans',sans-serif;font-size:14px;font-weight:bold;color:#434b55;letter-spacing:-0.438px;">Last Price</div>
<div class="t" style="left:950.60px;top:247.65px;font-family:'Liberation Sans',sans-serif;font-size:14px;font-weight:bold;color:#434b55;letter-spacing:-0.182px;">Last Order Date</div>
<div class="t" style="left:1098.00px;top:247.65px;font-family:'Liberation Sans',sans-serif;font-size:14px;font-weight:bold;color:#434b55;letter-spacing:-0.137px;">Order Unit</div>
<div class="t" style="left:1245.00px;top:247.65px;font-family:'Liberation Sans',sans-serif;font-size:14px;font-weight:bold;color:#434b55;letter-spacing:-0.188px;">Organization</div>
<div class="t" style="left:1393.00px;top:247.65px;font-family:'Liberation Sans',sans-serif;font-size:14px;font-weight:bold;color:#434b55;letter-spacing:-0.229px;">Site</div>
<div class="t" style="left:306.00px;top:285.69px;font-family:'Liberation Sans',sans-serif;font-size:13px;font-weight:normal;color:#222;letter-spacing:0.734px;">HELWIG</div>
<div class="t" style="left:902.50px;top:284.85px;font-family:'Liberation Sans',sans-serif;font-size:14px;font-weight:normal;color:#222;letter-spacing:0.650px;">1.49</div>
<div class="t" style="left:949.70px;top:285.05px;font-family:'Liberation Sans',sans-serif;font-size:14px;font-weight:normal;color:#222;letter-spacing:1.362px;">11/13/97</div>
<div class="t" style="left:1097.50px;top:285.69px;font-family:'Liberation Sans',sans-serif;font-size:13px;font-weight:normal;color:#222;letter-spacing:-0.323px;">ROLL</div>
<div class="t" style="left:1245.00px;top:285.69px;font-family:'Liberation Sans',sans-serif;font-size:13px;font-weight:normal;color:#222;letter-spacing:0.380px;">EAGLENA</div>
<div class="t" style="left:1393.00px;top:285.69px;font-family:'Liberation Sans',sans-serif;font-size:13px;font-weight:normal;color:#222;letter-spacing:-0.117px;">FLEET</div>
<div class="t" style="left:307.50px;top:318.69px;font-family:'Liberation Sans',sans-serif;font-size:13px;font-weight:normal;color:#222;letter-spacing:0.305px;">P-H</div>
<div class="t" style="left:902.50px;top:317.85px;font-family:'Liberation Sans',sans-serif;font-size:14px;font-weight:normal;color:#222;letter-spacing:0.650px;">1.49</div>
<div class="t" style="left:951.20px;top:318.05px;font-family:'Liberation Sans',sans-serif;font-size:14px;font-weight:normal;color:#222;letter-spacing:1.362px;">11/13/97</div>
<div class="t" style="left:1099.00px;top:318.69px;font-family:'Liberation Sans',sans-serif;font-size:13px;font-weight:normal;color:#222;letter-spacing:-0.323px;">ROLL</div>
<div class="t" style="left:1246.50px;top:318.69px;font-family:'Liberation Sans',sans-serif;font-size:13px;font-weight:normal;color:#222;letter-spacing:0.380px;">EAGLENA</div>
<div class="t" style="left:1394.50px;top:318.69px;font-family:'Liberation Sans',sans-serif;font-size:13px;font-weight:normal;color:#222;letter-spacing:-0.117px;">FLEET</div>
<div class="t" style="left:307.50px;top:351.69px;font-family:'Liberation Sans',sans-serif;font-size:13px;font-weight:normal;color:#222;letter-spacing:1.117px;">ATI</div>
<div class="t" style="left:902.50px;top:350.85px;font-family:'Liberation Sans',sans-serif;font-size:14px;font-weight:normal;color:#222;letter-spacing:0.650px;">1.49</div>
<div class="t" style="left:951.20px;top:351.05px;font-family:'Liberation Sans',sans-serif;font-size:14px;font-weight:normal;color:#222;letter-spacing:1.380px;">4/15/99</div>
<div class="t" style="left:1099.00px;top:351.69px;font-family:'Liberation Sans',sans-serif;font-size:13px;font-weight:normal;color:#222;letter-spacing:-0.323px;">ROLL</div>
<div class="t" style="left:1246.50px;top:351.69px;font-family:'Liberation Sans',sans-serif;font-size:13px;font-weight:normal;color:#222;letter-spacing:0.380px;">EAGLENA</div>
<div class="t" style="left:1394.50px;top:351.69px;font-family:'Liberation Sans',sans-serif;font-size:13px;font-weight:normal;color:#222;letter-spacing:0.240px;">BEDFORD</div>
<div class="t" style="left:307.50px;top:384.69px;font-family:'Liberation Sans',sans-serif;font-size:13px;font-weight:normal;color:#222;letter-spacing:1.117px;">ATI</div>
<div class="t" style="left:902.50px;top:383.85px;font-family:'Liberation Sans',sans-serif;font-size:14px;font-weight:normal;color:#222;letter-spacing:0.650px;">1.49</div>
<div class="t" style="left:951.20px;top:384.05px;font-family:'Liberation Sans',sans-serif;font-size:14px;font-weight:normal;color:#222;letter-spacing:1.380px;">2/13/98</div>
<div class="t" style="left:1099.00px;top:384.69px;font-family:'Liberation Sans',sans-serif;font-size:13px;font-weight:normal;color:#222;letter-spacing:-0.323px;">ROLL</div>
<div class="t" style="left:1246.50px;top:384.69px;font-family:'Liberation Sans',sans-serif;font-size:13px;font-weight:normal;color:#222;letter-spacing:0.380px;">EAGLENA</div>
<div class="t" style="left:1394.50px;top:384.69px;font-family:'Liberation Sans',sans-serif;font-size:13px;font-weight:normal;color:#222;letter-spacing:-0.117px;">FLEET</div>
<div class="t" style="left:307.50px;top:417.69px;font-family:'Liberation Sans',sans-serif;font-size:13px;font-weight:normal;color:#222;letter-spacing:0.734px;">HELWIG</div>
<div class="t" style="left:902.50px;top:416.85px;font-family:'Liberation Sans',sans-serif;font-size:14px;font-weight:normal;color:#222;letter-spacing:0.650px;">1.49</div>
<div class="t" style="left:951.20px;top:417.05px;font-family:'Liberation Sans',sans-serif;font-size:14px;font-weight:normal;color:#222;letter-spacing:1.380px;">1/13/99</div>
<div class="t" style="left:1099.00px;top:417.69px;font-family:'Liberation Sans',sans-serif;font-size:13px;font-weight:normal;color:#222;letter-spacing:-0.323px;">ROLL</div>
<div class="t" style="left:1246.50px;top:417.69px;font-family:'Liberation Sans',sans-serif;font-size:13px;font-weight:normal;color:#222;letter-spacing:0.380px;">EAGLENA</div>
<div class="t" style="left:1394.50px;top:417.69px;font-family:'Liberation Sans',sans-serif;font-size:13px;font-weight:normal;color:#222;letter-spacing:0.240px;">BEDFORD</div>
<div class="t" style="left:277.00px;top:462.99px;font-family:'Liberation Sans',sans-serif;font-size:13px;font-weight:bold;color:#f2f6fb;letter-spacing:0.034px;">New Row</div>
</body></html>
